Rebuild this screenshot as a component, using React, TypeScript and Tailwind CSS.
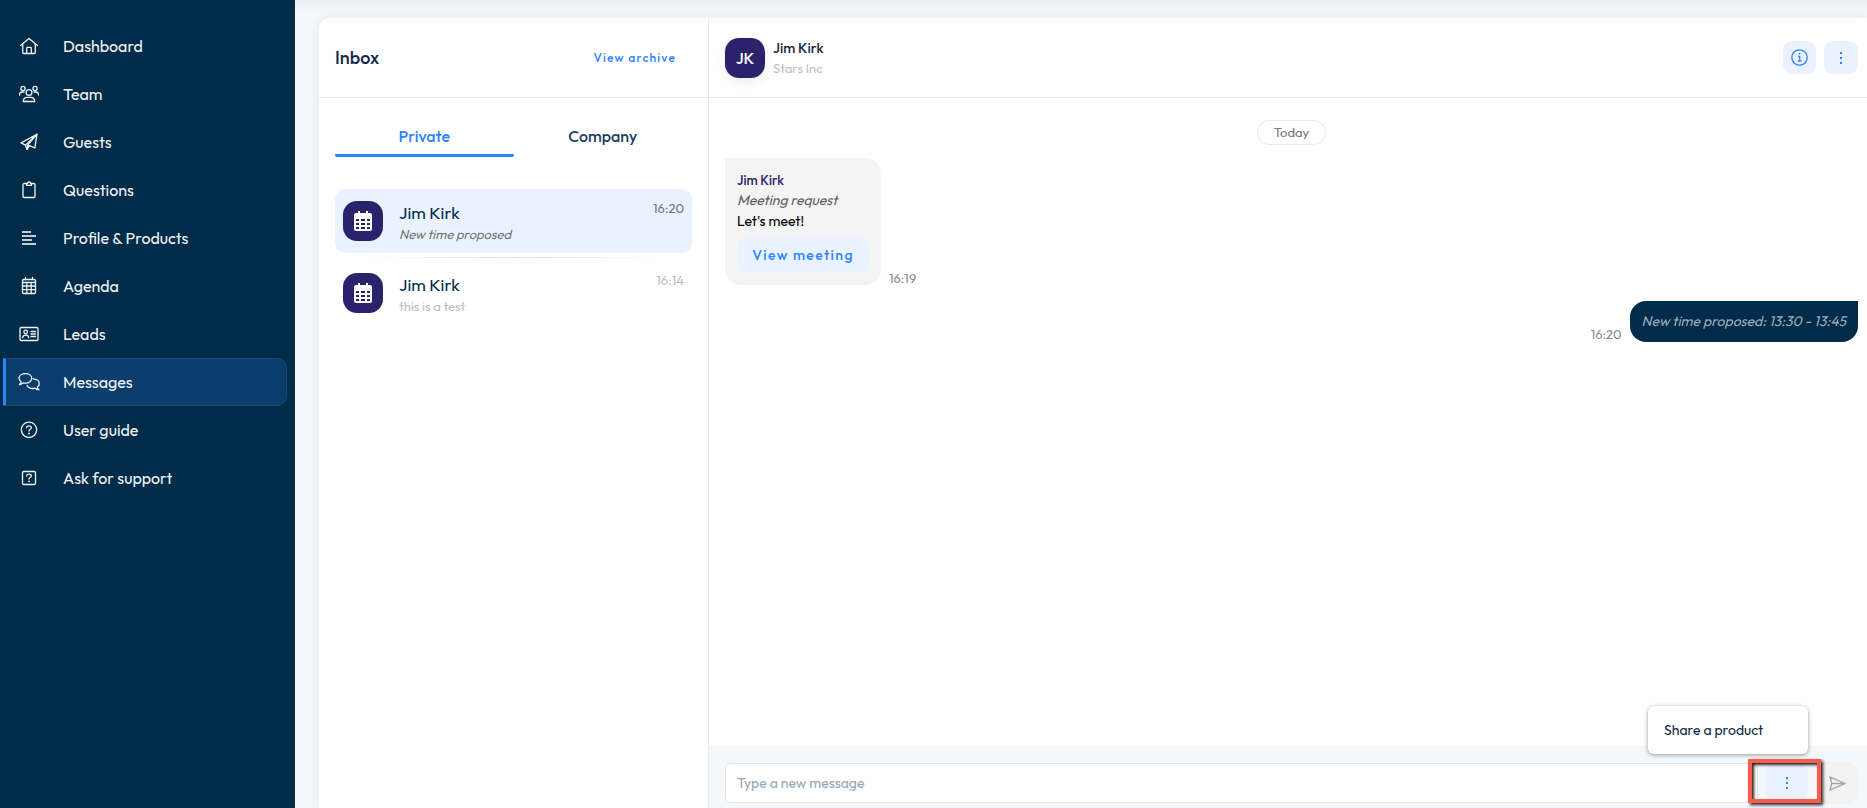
import type { ReactNode } from "react";
import clsx from "clsx";

type IconProps = { children: ReactNode; className?: string; width?: number; height?: number; box?: string };

function Icon({ children, className, width = 20, height = 20, box = "0 0 20 20" }: IconProps) {
  return (
    <svg
      width={width}
      height={height}
      viewBox={box}
      className={className}
      fill="none"
      stroke="currentColor"
      strokeWidth="1.3"
      strokeLinecap="round"
      strokeLinejoin="round"
      aria-hidden="true"
    >
      {children}
    </svg>
  );
}

const navItems = [
  {
    label: "Dashboard",
    icon: (
      <Icon>
        <path d="M1.5 9.6 10 2.4l8.500 7.200" />
        <path d="M3.700 8v8.300c0 .7.500 1.200 1.200 1.200h10.200c.7 0 1.200-.5 1.200-1.200V8" />
        <path d="M7.700 17.400v-5.300c0-.4.300-.7.700-.7h3.200c.4 0 .7.300.7.700v5.300" />
      </Icon>
    ),
  },
  {
    label: "Team",
    icon: (
      <Icon>
        <circle cx="10" cy="8.500" r="2.900" />
        <circle cx="4" cy="4.500" r="2.100" />
        <circle cx="16" cy="4.500" r="2.100" />
        <path d="M4.300 17.500c0-2.600 1.700-4.200 4-4.200h3.400c2.300 0 4 1.600 4 4.200z" />
        <path d="M.5 11c0-2 1-3 2.500-3h2M19.500 11c0-2-1-3-2.500-3h-2" />
      </Icon>
    ),
  },
  {
    label: "Guests",
    icon: (
      <Icon>
        <path d="M17.900 2.300 2.100 10.900l4.300 2.200L17.900 2.300 15.900 16l-5.300-2.300-2.500 3.700-1.700-4.300" />
        <path d="M17.900 2.300 8.700 13l1.900.7M8.100 17.400 8.700 13" />
      </Icon>
    ),
  },
  {
    label: "Questions",
    icon: (
      <Icon>
        <path d="M7.600 3.500H5.200c-.7 0-1.200.5-1.200 1.200v11.600c0 .7.500 1.200 1.200 1.200h9.600c.7 0 1.200-.5 1.200-1.200V4.700c0-.7-.5-1.200-1.200-1.200h-2.400" />
        <path d="M7.500 5.300V3.500h1c.1-1 .7-1.500 1.500-1.500s1.400.5 1.500 1.500h1v1.800z" />
      </Icon>
    ),
  },
  {
    label: "Profile & Products",
    icon: (
      <Icon>
        <path d="M3 4h9M3 8h14M3 12h10M3 16h14" strokeLinecap="butt" strokeWidth="2" opacity=".8" />
      </Icon>
    ),
  },
  {
    label: "Agenda",
    icon: (
      <Icon>
        <rect x="3.500" y="3.500" width="13" height="14" rx="1.200" />
        <path d="M6.500 1.500v2M13.500 1.500v2M3.500 6.500h13M3.500 10h13M3.500 13.700h13M7.800 6.500v11M12.200 6.500v11" />
      </Icon>
    ),
  },
  {
    label: "Leads",
    icon: (
      <Icon>
        <rect x="1" y="3.500" width="18" height="13" rx="1.200" />
        <circle cx="6.700" cy="8" r="1.800" />
        <path d="M3.700 13.500c.2-1.700 1-2.400 3-2.400s2.800.7 3 2.400M12 7.500h4.500M12 10h4.500M12 12.500h4.500" />
      </Icon>
    ),
  },
  {
    label: "Messages",
    active: true,
    icon: (
      <Icon className="overflow-visible">
        <path d="M.5 12.700c.9-1 1.400-2 1.500-3C.7 8.700 0 7.500 0 6.200 0 3.600 2.800 1.700 6.400 1.700s6.400 1.900 6.400 4.600-2.800 4.800-6.400 4.800c-.8 0-1.600-.1-2.300-.3-.9.900-2.100 1.600-3.600 1.900z" />
        <path d="M14.200 6.800c3.400.2 6.100 2.300 6.100 4.900 0 1.300-.7 2.400-1.900 3.300.1.900.7 1.900 1.500 2.800-1.600-.1-2.900-.8-3.800-1.600-.7.200-1.400.3-2.200.3-2.700 0-4.900-1.200-5.800-3" />
      </Icon>
    ),
  },
  {
    label: "User guide",
    icon: (
      <Icon>
        <circle cx="10" cy="9.800" r="7.700" />
        <path d="M7.700 7.800c0-1.200.8-1.900 2.200-1.900 1.300 0 2.400.7 2.400 1.900 0 1.600-2.300 1.700-2.300 3.300" />
        <path d="M10 13.400v.3" strokeWidth="1.700" />
      </Icon>
    ),
  },
  {
    label: "Ask for support",
    icon: (
      <Icon>
        <rect x="3.500" y="3.500" width="13" height="13" rx="1.300" />
        <path d="M7.800 8c0-1.200.8-1.800 2.200-1.800 1.300 0 2.300.6 2.300 1.800 0 1.500-2.300 1.600-2.300 3" />
        <path d="M10 13.300v.3" strokeWidth="1.600" />
      </Icon>
    ),
  },
];

const threads = [
  { name: "Jim Kirk", text: "New time proposed", time: "16:20", active: true },
  { name: "Jim Kirk", text: "this is a test", time: "16:14", active: false },
];

function Dots() {
  return (
    <svg width="2" height="12" viewBox="0 0 2 12" fill="currentColor" aria-hidden="true">
      <path d="M0 0h2v2H0zM0 5h2v2H0zM0 10h2v2H0z" />
    </svg>
  );
}

function CalendarBadge() {
  return (
    <span className="flex size-10 shrink-0 items-center justify-center rounded-[14px] bg-[#2a226b] text-white">
      <svg width="18" height="22" viewBox="0 0 18 22" aria-hidden="true">
        <path fill="currentColor" d="M4 1h2v2h6V1h2v2h2a2 2 0 0 1 2 2v14a2 2 0 0 1-2 2H2a2 2 0 0 1-2-2V5a2 2 0 0 1 2-2h2z" />
        <path
          fill="#2a226b"
          d="M2 9h3v2H2zM7 9h4v2H7zM13 9h3v2h-3zM2 13h3v2H2zM7 13h4v2H7zM13 13h3v2h-3zM2 17h3v2H2zM7 17h4v2H7zM13 17h3v2h-3z"
        />
      </svg>
    </span>
  );
}

function Sidebar() {
  return (
    <nav className="w-[295px] shrink-0 bg-[#002b49] pt-[22px] pr-2 pl-[3px]">
      {navItems.map((item) => (
        <a
          key={item.label}
          href="#"
          className={clsx(
            "flex h-12 items-center gap-6 text-base text-[#f1f4f6]",
            item.active
              ? "rounded-r-[10px] border border-l-3 border-[#1c4a75] border-l-[#2b84ff] bg-[#0a3d6c] pl-[13px]"
              : "pl-4",
          )}
        >
          {item.icon}
          <span>{item.label}</span>
        </a>
      ))}
    </nav>
  );
}

function Inbox() {
  return (
    <section className="flex w-[390px] shrink-0 flex-col border-r border-[#ebebeb]">
      <header className="flex h-20 items-center justify-between border-b border-[#ebebeb] pr-8 pl-4">
        <h1 className="text-lg font-medium text-[#0f2a47]">Inbox</h1>
        <button className="text-xs font-medium tracking-widest text-[#2b84ff]">View archive</button>
      </header>
      <div className="flex px-4 pt-[19px]">
        <button className="h-10 flex-1 rounded-[2px] border-b-3 border-[#2b84ff] text-base font-medium text-[#2b84ff]">
          Private
        </button>
        <button className="h-10 flex-1 border-b-3 border-transparent text-base font-medium text-[#1f3f5b]">Company</button>
      </div>
      <ul className="px-4 pt-8">
        {threads.map((thread, i) => (
          <li key={i}>
            {i > 0 && (
              <div className="mx-8 mt-1 mb-[3px] h-px bg-linear-to-r from-transparent via-[#dcdcdc] to-transparent" />
            )}
            <button
              className={clsx(
                "flex h-16 w-full gap-4 rounded-[10px] px-2 py-3 text-left",
                thread.active && "bg-[#eaf2ff]",
              )}
            >
              <CalendarBadge />
              <span className="flex flex-1 flex-col">
                <span className="text-[17px] leading-[23px] text-[#002b49]">{thread.name}</span>
                <span className={clsx("text-[13px] leading-5", thread.active ? "text-[#757575] italic" : "text-[#bdbdbd]")}>
                  {thread.text}
                </span>
              </span>
              <span className={clsx("text-[13px] leading-[14px]", thread.active ? "text-[#757575]" : "text-[#bdbdbd]")}>
                {thread.time}
              </span>
            </button>
          </li>
        ))}
      </ul>
    </section>
  );
}

function ChatHeader() {
  return (
    <header className="flex h-20 shrink-0 items-center border-b border-[#ebebeb] pr-[9px] pl-4">
      <span className="flex size-10 items-center justify-center rounded-[14px] bg-[#2a226b] text-base font-medium text-white shadow-[0_4px_10px_rgba(0,0,0,0.08)]">
        JK
      </span>
      <div className="ml-2 flex-1">
        <h2 className="text-sm leading-5 font-medium text-[#0f2a47]">Jim Kirk</h2>
        <p className="text-[13px] leading-5 text-[#c0c0c0]">Stars Inc</p>
      </div>
      <div className="flex gap-2 text-[#2b84ff]">
        <button aria-label="Info" className="flex size-[33px] items-center justify-center rounded-[9px] bg-[#eaf2ff]">
          <Icon width={17} height={17} box="0 0 17 17">
            <circle cx="8.500" cy="8.500" r="7.700" />
            <path d="M7 7.500h1.700V12M6.800 12h3.700" strokeLinecap="butt" />
            <path d="M8.500 4.600v.4" strokeWidth="1.500" />
          </Icon>
        </button>
        <button aria-label="More" className="flex h-[33px] w-[34px] items-center justify-center rounded-[9px] bg-[#eaf2ff]">
          <Dots />
        </button>
      </div>
    </header>
  );
}

function Conversation() {
  return (
    <div className="flex flex-1 flex-col pr-[9px] pl-4">
      <div className="mt-[22px] flex justify-center">
        <span className="rounded-xl border border-[#ebebeb] px-4 text-[13px] leading-[23px] text-[#757575]">Today</span>
      </div>
      <div className="mt-[13px] flex items-end gap-2">
        <div className="rounded-2xl rounded-tl-none bg-[#f4f4f4] p-3">
          <p className="text-[13px] leading-5 font-medium text-[#2a226b]">Jim Kirk</p>
          <p className="text-sm leading-5 text-[#616161] italic">Meeting request</p>
          <p className="text-sm leading-[23px] text-black">Let's meet!</p>
          <button className="mt-1 h-9 w-[132px] rounded-[10px] bg-[#eaf2ff] text-sm font-medium tracking-widest text-[#2b84ff]">
            View meeting
          </button>
        </div>
        <time className="text-[13px] leading-[14px] text-[#8a8a8a]">16:19</time>
      </div>
      <div className="mt-4 flex items-end justify-end gap-2">
        <time className="text-[13px] leading-4 text-[#8a8a8a]">16:20</time>
        <p className="rounded-2xl rounded-tr-none bg-[#002b49] px-3 text-sm leading-[41px] text-[#9badba] italic">
          New time proposed: 13:30 - 13:45
        </p>
      </div>
    </div>
  );
}

function Composer() {
  return (
    <form className="flex items-center bg-[#f3f8fd] pt-4 pr-[9px] pb-1 pl-4">
      <input
        aria-label="Type a new message"
        placeholder="Type a new message"
        className="h-10 min-w-0 flex-1 rounded-md border border-[#e3e5e8] bg-white px-[11px] text-sm text-[#002b49] outline-none placeholder:text-[#93a9b8]"
      />
      <div className="relative ml-2 flex">
        <button
          type="button"
          aria-label="More actions"
          className="flex h-[42px] w-[42px] items-center justify-center rounded-xl bg-[#eaf2ff] text-[#2b84ff]"
        >
          <Dots />
        </button>
        <div className="absolute right-0 bottom-[50px] w-40 rounded-md bg-white shadow-[0_1px_4px_rgba(0,0,0,0.4)]">
          <button type="button" className="h-12 w-full px-4 text-left text-sm text-[#0f2a47]">
            Share a product
          </button>
        </div>
        <div className="pointer-events-none absolute -top-[3px] -right-[13px] -left-[18px] z-10 h-11 border-4 border-[#ff5a4b] shadow-[2px_2px_3px_#222,inset_2px_2px_3px_#222]" />
      </div>
      <button
        type="submit"
        aria-label="Send"
        className="ml-2 flex h-[42px] w-[42px] items-center justify-center rounded-xl bg-[#f2f2f2] text-[#a5a5a5]"
      >
        <Icon width={17} height={15} box="0 0 17 15">
          <path d="M.8.8 16 7.500.8 14.200l2-6.700zM2.800 7.500H16" />
        </Icon>
      </button>
    </form>
  );
}

export default function App() {
  return (
    <div className="flex h-screen overflow-hidden bg-[#f3f8fd] font-['Outfit','Lato',sans-serif]">
      <Sidebar />
      <main className="flex min-w-0 flex-1 flex-col bg-linear-to-b from-[#e9eff4] to-[#f3f8fd] to-[12px] pt-[18px] pl-6">
        <div className="flex min-h-0 flex-1 rounded-tl-[10px] bg-white shadow-[0_0_12px_rgba(0,43,73,0.07)]">
          <Inbox />
          <section className="flex min-w-0 flex-1 flex-col">
            <ChatHeader />
            <Conversation />
            <Composer />
          </section>
        </div>
      </main>
    </div>
  );
}
